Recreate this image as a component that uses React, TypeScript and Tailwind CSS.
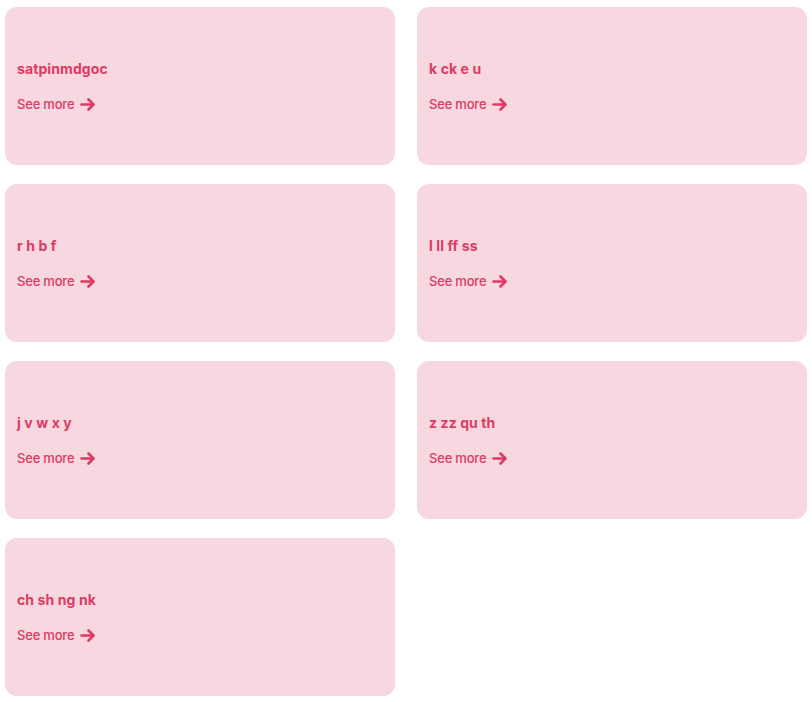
import React from "react";

const items = [
  "satpinmdgoc",
  "k ck e u",
  "r h b f",
  "l ll ff ss",
  "j v w x y",
  "z zz qu th",
  "ch sh ng nk",
];

function Arrow() {
  return (
    <svg width="15" height="16" viewBox="0 0 15 16" fill="none" stroke="currentColor" strokeWidth="2.6" strokeLinecap="round" strokeLinejoin="round">
      <path d="M1.5 8.5h11.5" />
      <path d="M8.5 3.5l5 5-5 5" />
    </svg>
  );
}

export default function App() {
  return (
    <div className="bg-white w-[812px] min-h-[702px] px-[5px] pt-[7px]" style={{ fontFamily: "Inter, 'Noto Sans', sans-serif" }}>
      <div className="grid grid-cols-2 gap-x-[22px] gap-y-[19px]">
        {items.map((t) => (
          <div key={t} className="h-[158px] rounded-[12px] bg-[#f7d7e0] px-[12px] flex flex-col justify-center text-[#df3a64]">
            <div className="text-[14px] font-bold leading-[20px] tracking-[0.1px]">{t}</div>
            <div className="mt-[15px] flex items-center gap-[6px] text-[13px] font-medium leading-[20px] tracking-[-0.2px]">
              <span>See more</span>
              <Arrow />
            </div>
          </div>
        ))}
      </div>
    </div>
  );
}
